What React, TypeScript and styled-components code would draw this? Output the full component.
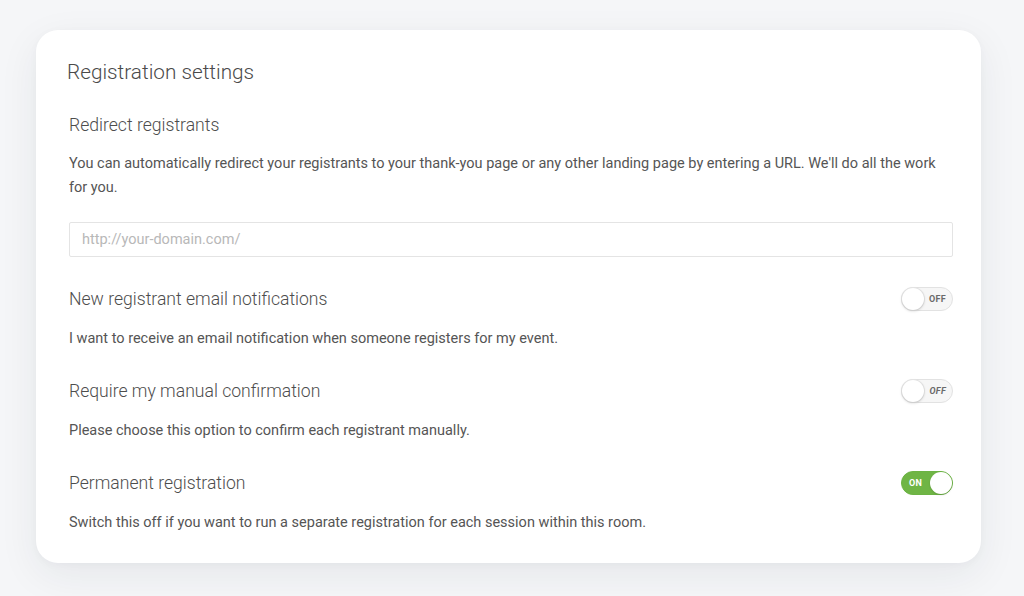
import styled, { createGlobalStyle } from 'styled-components';

const GlobalStyle = createGlobalStyle`
  * {
    box-sizing: border-box;
  }

  body {
    margin: 0;
    background-color: #f5f6f8;
    font-family: Roboto, "Liberation Sans", Arial, sans-serif;
  }
`;

const Page = styled.div`
  width: 1024px;
  height: 596px;
  padding: 30px 43px 0 36px;
  background-color: #f5f6f8;
`;

const Card = styled.div`
  display: flex;
  flex-direction: column;
  width: 945px;
  padding: 28px 28px 28px 33px;

  border-radius: 22px;
  background-color: #ffffff;
  box-shadow: 0 12px 40px rgba(30, 40, 60, 0.07), 0 2px 8px rgba(30, 40, 60, 0.03);
`;

const Title = styled.h1`
  margin: 0 0 27px -2px;
  font-size: 20.75px;
  font-weight: 300;
  line-height: 28px;
  color: #4a4a4a;
`;

const Section = styled.section<{ $spacing?: number }>`
  display: flex;
  flex-direction: column;
  margin-bottom: ${({ $spacing }) => $spacing ?? 28}px;

  &:last-child {
    margin-bottom: 0;
  }
`;

const HeaderRow = styled.div<{ $gap?: number }>`
  display: flex;
  align-items: center;
  justify-content: space-between;
  height: 24px;
  margin-bottom: ${({ $gap }) => $gap ?? 16}px;
`;

const Heading = styled.h2`
  margin: 0;
  font-size: 17.6px;
  font-weight: 300;
  line-height: 24px;
  color: #4d4d4d;
`;

const Description = styled.p`
  margin: 0;
  font-size: 14.5px;
  font-weight: 400;
  line-height: 24px;
  color: #555555;
`;

const UrlInput = styled.input`
  width: 100%;
  height: 35px;
  margin-top: 22px;
  padding: 0 12px;

  border: 1px solid #e4e4e4;
  border-radius: 2px;
  outline: none;
  font-family: Roboto, "Liberation Sans", Arial, sans-serif;
  font-size: 14.5px;
  color: #555555;

  &::placeholder {
    color: #b8b8b8;
  }
`;

const Track = styled.button<{ $on: boolean }>`
  position: relative;
  flex-shrink: 0;
  width: 52px;
  height: 24px;
  padding: 0;

  border: 1px solid ${({ $on }) => ($on ? '#6cb344' : '#e2e2e2')};
  border-radius: 12px;
  background-color: ${({ $on }) => ($on ? '#6fb545' : '#f6f6f6')};
  cursor: pointer;
`;

const Knob = styled.span<{ $on: boolean }>`
  position: absolute;
  top: 0;
  left: ${({ $on }) => ($on ? '28px' : '0')};
  width: 22px;
  height: 22px;

  border-radius: 50%;
  background-color: #ffffff;
  box-shadow: ${({ $on }) =>
    $on ? '0 1px 2px rgba(0, 0, 0, 0.15)' : '0 1px 3px rgba(0, 0, 0, 0.18), 0 0 0 1px #e8e8e8'};
`;

const ToggleLabel = styled.span<{ $on: boolean; $italic?: boolean }>`
  position: absolute;
  top: 0;
  ${({ $on }) => ($on ? 'left: 7px;' : 'right: 6px;')}
  font-family: Roboto, "Liberation Sans", Arial, sans-serif;
  font-size: 9px;
  font-weight: 700;
  font-style: ${({ $italic }) => ($italic ? 'italic' : 'normal')};
  line-height: 22px;
  letter-spacing: 0.3px;
  color: ${({ $on }) => ($on ? '#ffffff' : '#6a6a6a')};
`;

type ToggleProps = {
  on: boolean;
  italic?: boolean;
};

function Toggle({ on, italic }: ToggleProps) {
  return (
    <Track $on={on} type="button" aria-pressed={on}>
      <ToggleLabel $on={on} $italic={italic}>{on ? 'ON' : 'OFF'}</ToggleLabel>
      <Knob $on={on} />
    </Track>
  );
}

type SettingProps = {
  title: string;
  description: string;
  on: boolean;
  italic?: boolean;
};

function ToggleSetting({ title, description, on, italic }: SettingProps) {
  return (
    <Section>
      <HeaderRow>
        <Heading>{title}</Heading>
        <Toggle on={on} italic={italic} />
      </HeaderRow>
      <Description>{description}</Description>
    </Section>
  );
}

export default function App() {
  return (
    <Page>
      <GlobalStyle />
      <Card>
        <Title>Registration settings</Title>

        <Section $spacing={30}>
          <HeaderRow $gap={15}>
            <Heading>Redirect registrants</Heading>
          </HeaderRow>
          <Description>
            You can automatically redirect your registrants to your thank-you page or any other landing page by
            entering a URL. We'll do all the work for you.
          </Description>
          <UrlInput type="text" placeholder="http://your-domain.com/" />
        </Section>

        <ToggleSetting
          title="New registrant email notifications"
          description="I want to receive an email notification when someone registers for my event."
          on={false}
        />
        <ToggleSetting
          title="Require my manual confirmation"
          description="Please choose this option to confirm each registrant manually."
          on={false}
          italic
        />
        <ToggleSetting
          title="Permanent registration"
          description="Switch this off if you want to run a separate registration for each session within this room."
          on
        />
      </Card>
    </Page>
  );
}
